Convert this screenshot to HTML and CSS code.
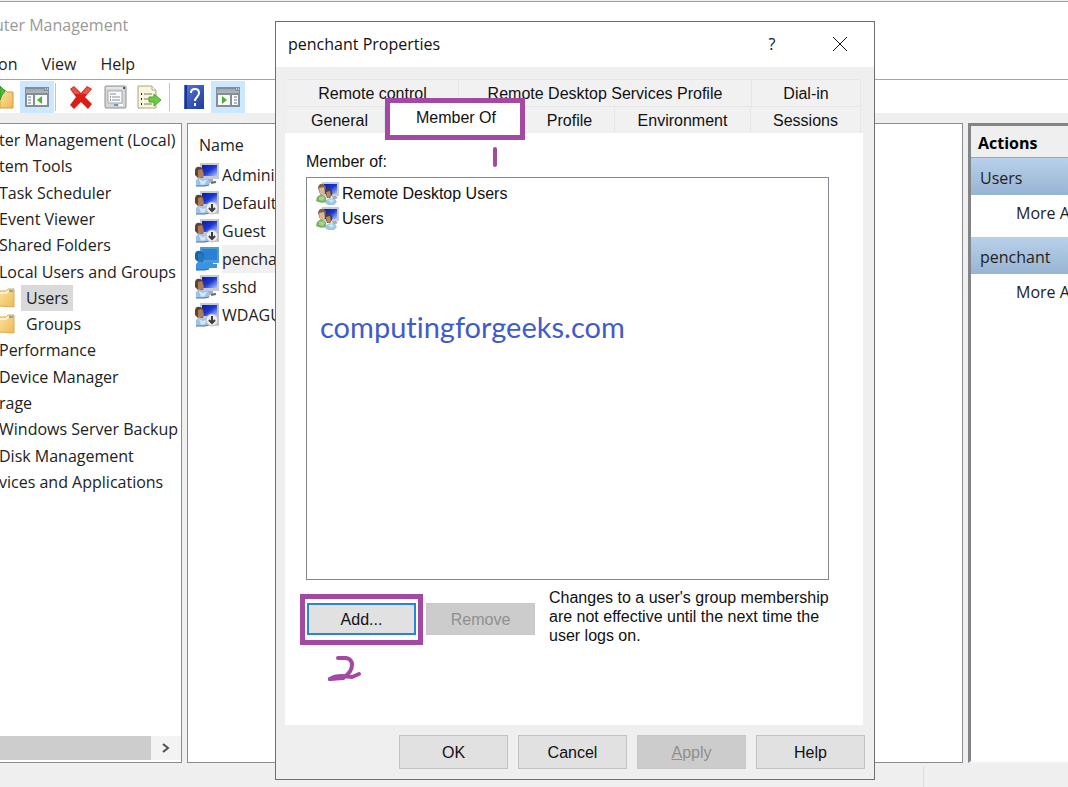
FILE: index.html
```html
<!DOCTYPE html>
<html lang="en">
<head>
  <meta charset="UTF-8">
  <meta name="viewport" content="width=device-width, initial-scale=1.0">
  <title>Computer Management</title>
  <link rel="stylesheet" href="styles.css">
</head>
<body>
  <!-- Shared icons -->
  <svg class="defs" width="0" height="0" aria-hidden="true">
    <defs>
      <linearGradient id="screen" x1="0" y1="0" x2="1" y2="1">
        <stop offset="0" stop-color="#0a1caa"/>
        <stop offset="0.5" stop-color="#1c36d2"/>
        <stop offset="1" stop-color="#b4c8fa"/>
      </linearGradient>
      <linearGradient id="folderFill" x1="0" y1="0" x2="1" y2="1">
        <stop offset="0" stop-color="#fde6a0"/>
        <stop offset="1" stop-color="#edb854"/>
      </linearGradient>
      <linearGradient id="bookFill" x1="0" y1="0" x2="1" y2="1">
        <stop offset="0" stop-color="#5877d8"/>
        <stop offset="1" stop-color="#1f3c9c"/>
      </linearGradient>
      <symbol id="user" viewBox="0 0 24 24">
        <path d="M5 0h19v16H5z" fill="#c6cad2"/>
        <path d="M7 2h15v11H7z" fill="url(#screen)"/>
        <path d="M13 16h5v2h3v2h-8z" fill="#a9adb3"/>
        <path d="M16 20l5-1" stroke="#6d7178" stroke-width="2"/>
        <path d="M0 7q1-4 5-3 4 1 4 5l-1 6H3L0 12z" fill="#5a4436"/>
        <path d="M3 7l4-1 2 6-2 3-4-1z" fill="#b17b55"/>
        <path d="M1 23v-6l3-3 4 2 4-1 3 4-1 3-4 1z" fill="#9cc3ea"/>
        <path d="M4 16l4 2 4-2-2 5-4 1z" fill="#d3e7f9"/>
        <path d="M1 23h9l4-1" fill="none" stroke="#55718f"/>
      </symbol>
      <symbol id="user-disabled" viewBox="0 0 24 24">
        <path d="M22 1h2v22h-8z" fill="#c6cad2"/>
        <use href="#user" width="24" height="24"/>
        <path d="M23 1v21" stroke="#b9bdc5" stroke-width="2"/>
        <circle cx="17" cy="17" r="6" fill="#ececec" stroke="#b9bcc2"/>
        <path d="M17 13v7M14 17l3 3 3-3" fill="none" stroke="#3c3c3c" stroke-width="2"/>
      </symbol>
      <symbol id="user-selected" viewBox="0 0 24 24">
        <path d="M5 0h19v16H5z" fill="#4b9bd8"/>
        <path d="M7 2h15v11H7z" fill="#2a80d2"/>
        <path d="M12 15h6v2h4v4h-8z" fill="#3e92d6"/>
        <path d="M0 7q1-4 5-3 4 1 4 5l-1 6H3L0 12z" fill="#1a64a8"/>
        <path d="M3 7l4-1 2 6-2 3-4-1z" fill="#2876ba"/>
        <path d="M1 23v-6l3-3 4 2 4-1 3 4-1 3-4 1z" fill="#3a94e2"/>
        <path d="M1 23h9l4-1" fill="none" stroke="#1d6db2"/>
      </symbol>
      <symbol id="group" viewBox="0 0 24 24">
        <path d="M7 0h17v14H7z" fill="#c6cad2"/>
        <path d="M9 2h13v10H9z" fill="url(#screen)"/>
        <path d="M17 14h4l2 2-5 2z" fill="#a9adb3"/>
        <path d="M3 6q1-5 5-4 3 1 3 4l-1 6H5z" fill="#7d5f4b"/>
        <path d="M4 6l5-1 1 6-3 3-2-2z" fill="#dbb698"/>
        <path d="M1 19l1-4 4-3 5 3v5q-5 2-10-1z" fill="#76b25f"/>
        <path d="M4 15l4-1 2 2-2 3-4-1z" fill="#a5d38d"/>
        <path d="M10 9q2-4 5-2 3 2 2 6l-2 3h-3z" fill="#4f3c31"/>
        <path d="M11 10l4-1 1 5-2 2-2-1z" fill="#b4876a"/>
        <path d="M10 21l1-3 4-2 5 1 2 3-3 3h-6z" fill="#9dc6e4"/>
        <path d="M13 18l4-1 2 2-3 2z" fill="#cbe3f4"/>
      </symbol>
      <symbol id="folder" viewBox="0 0 16 20">
        <path d="M0 3h7l2-2h6v18l-15-1z" fill="url(#folderFill)" stroke="#d9ac50"/>
        <path d="M0 5h7l2-2h5" fill="none" stroke="#fff3c9" stroke-width="2"/>
        <path d="M10 3h4" stroke="#8fa2b2" stroke-width="2"/>
      </symbol>
    </defs>
  </svg>

  <div class="window">
    <header class="titlebar">uter Management</header>
    <nav class="menubar">
      <button type="button">on</button>
      <button type="button">View</button>
      <button type="button">Help</button>
    </nav>
    <div class="toolbar">
      <button type="button" class="tool tool-cut" aria-label="Up one level">
        <svg width="14" height="24" viewBox="0 0 14 24">
          <path d="M0 5h5l2 2h6v16H0z" fill="url(#folderFill)" stroke="#cf9c3e"/>
          <path d="M0 1l5 5-3 4-2 5z" fill="#4dbb37" stroke="#35962a"/>
        </svg>
      </button>
      <button type="button" class="tool active" aria-label="Show/Hide Console Tree">
        <svg width="24" height="20" viewBox="0 0 24 20">
          <path d="M0 0h24v20H0z" fill="#858d97"/>
          <path d="M1 3h18" stroke="#c2c8cf"/>
          <path d="M20 2h1M22 2h1" stroke="#fff"/>
          <path d="M1 5h22" stroke="#d5dae0"/>
          <path d="M2 8h6v10H2zM10 8h12v10H10z" fill="#fafafa"/>
          <path d="M3 10h3M3 13h3M3 16h3" stroke="#6b7785"/>
          <path d="M17 9v8l-5-4z" fill="#47b52f"/>
        </svg>
      </button>
      <span class="sep"></span>
      <button type="button" class="tool" aria-label="Delete">
        <svg width="24" height="24" viewBox="0 0 24 24">
          <path d="M1 4l4-3 7 7 6-7 5 3-7 8 7 7-4 5-7-7-7 7-4-4 6-8z" fill="#d91e18"/>
          <path d="M2 4l3-2 7 8 6-8 4 2-4 5H6z" fill="#e9544c"/>
        </svg>
      </button>
      <button type="button" class="tool" aria-label="Properties">
        <svg width="23" height="24" viewBox="0 0 23 24">
          <rect x="1" y="1" width="21" height="22" rx="1" fill="#d4d6d8" stroke="#8d9297"/>
          <path d="M2 3h17" stroke="#f4f4f4"/>
          <path d="M19 2l2 2M21 2l-2 2" stroke="#555"/>
          <path d="M4 6h14v12H4z" fill="#fafafa" stroke="#a5a9ad"/>
          <path d="M6 9h6M8 12h8M8 15h8" stroke="#8b8f94"/>
          <path d="M6 12h1M6 15h1" stroke="#333"/>
          <path d="M10 20h4" stroke="#4b9fe0" stroke-width="2"/>
          <path d="M15 20h4" stroke="#fff" stroke-width="2"/>
        </svg>
      </button>
      <button type="button" class="tool" aria-label="Export List">
        <svg width="24" height="24" viewBox="0 0 24 24">
          <path d="M1 1h14l4 4v18H1z" fill="#fbf5dc" stroke="#a9a48c"/>
          <path d="M15 1v4h4" fill="#fff" stroke="#a9a48c"/>
          <path d="M7 9h8M7 14h6M7 19h8" stroke="#7d7b70"/>
          <path d="M4 9h1M4 14h1M4 19h1" stroke="#222" stroke-width="2"/>
          <path d="M12 12h5V9l7 6-7 6v-4h-5z" fill="#6bcb45" stroke="#48a92f"/>
        </svg>
      </button>
      <span class="sep"></span>
      <button type="button" class="tool" aria-label="Help">
        <svg width="20" height="24" viewBox="0 0 20 24">
          <path d="M0 0h20v24H0z" fill="url(#bookFill)"/>
          <path d="M2 0v24" stroke="#1b348c" stroke-width="2"/>
          <path d="M7 8q0-4 4-4t4 4q0 2-2 4t-2 4" fill="none" stroke="#fff" stroke-width="2"/>
          <path d="M11 18v3" stroke="#fff" stroke-width="2"/>
        </svg>
      </button>
      <button type="button" class="tool active" aria-label="Show/Hide Action Pane">
        <svg width="24" height="20" viewBox="0 0 24 20">
          <path d="M0 0h24v20H0z" fill="#858d97"/>
          <path d="M1 3h18" stroke="#c2c8cf"/>
          <path d="M20 2h1M22 2h1" stroke="#fff"/>
          <path d="M1 5h22" stroke="#d5dae0"/>
          <path d="M2 8h12v10H2zM16 8h6v10h-6z" fill="#fafafa"/>
          <path d="M18 10h3M18 13h3M18 16h3" stroke="#6b7785"/>
          <path d="M6 9v8l5-4z" fill="#47b52f"/>
        </svg>
      </button>
    </div>

    <main class="panes">
      <section class="pane tree-pane">
        <ul class="tree">
          <li>ter Management (Local)</li>
          <li>tem Tools</li>
          <li>Task Scheduler</li>
          <li>Event Viewer</li>
          <li>Shared Folders</li>
          <li>Local Users and Groups</li>
          <li class="leaf"><svg width="16" height="20"><use href="#folder"/></svg><span class="selected">Users</span></li>
          <li class="leaf"><svg width="16" height="20"><use href="#folder"/></svg><span>Groups</span></li>
          <li>Performance</li>
          <li>Device Manager</li>
          <li>rage</li>
          <li>Windows Server Backup</li>
          <li>Disk Management</li>
          <li>vices and Applications</li>
        </ul>
        <div class="scrollbar">
          <span class="thumb"></span>
          <button type="button" aria-label="Scroll right">
            <svg width="8" height="10" viewBox="0 0 8 10"><path d="M1 1l5 4-5 4" fill="none" stroke="#505050" stroke-width="2"/></svg>
          </button>
        </div>
      </section>

      <section class="pane">
        <table class="users">
          <colgroup>
            <col class="col-pic">
            <col>
          </colgroup>
          <thead>
            <tr><th colspan="2">Name</th></tr>
          </thead>
          <tbody>
            <tr><td class="pic"><svg width="24" height="24"><use href="#user"/></svg></td><td>Administrator</td></tr>
            <tr><td class="pic"><svg width="24" height="24"><use href="#user-disabled"/></svg></td><td>DefaultAccount</td></tr>
            <tr><td class="pic"><svg width="24" height="24"><use href="#user-disabled"/></svg></td><td>Guest</td></tr>
            <tr><td class="pic"><svg width="24" height="24"><use href="#user-selected"/></svg></td><td class="current">penchant</td></tr>
            <tr><td class="pic"><svg width="24" height="24"><use href="#user"/></svg></td><td>sshd</td></tr>
            <tr><td class="pic"><svg width="24" height="24"><use href="#user-disabled"/></svg></td><td>WDAGUtilityAccount</td></tr>
          </tbody>
        </table>
      </section>

      <aside class="actions">
        <h2>Actions</h2>
        <h3>Users</h3>
        <a href="#">More Actions</a>
        <h3>penchant</h3>
        <a href="#">More Actions</a>
      </aside>
    </main>
    <footer class="statusbar"><span></span></footer>
  </div>

  <div class="dialog" role="dialog" aria-labelledby="dialogTitle">
    <div class="dialog-title">
      <h1 id="dialogTitle">penchant Properties</h1>
      <button type="button" class="help">?</button>
      <button type="button" class="close" aria-label="Close">
        <svg width="16" height="16" viewBox="0 0 16 16"><path d="M1 1l14 14M15 1L1 15" stroke="#111" fill="none"/></svg>
      </button>
    </div>

    <div class="tabs" role="tablist">
      <div class="tab-row row-back">
        <button type="button" role="tab">Remote control</button>
        <button type="button" role="tab">Remote Desktop Services Profile</button>
        <button type="button" role="tab">Dial-in</button>
      </div>
      <div class="tab-row row-front">
        <button type="button" role="tab">General</button>
        <button type="button" role="tab" class="open" aria-selected="true">Member Of
          <svg class="mark-one" width="6" height="22" viewBox="0 0 6 22"><path d="M3 3v16" stroke="#a349a4" stroke-width="4" stroke-linecap="round"/></svg>
        </button>
        <button type="button" role="tab">Profile</button>
        <button type="button" role="tab">Environment</button>
        <button type="button" role="tab">Sessions</button>
      </div>
    </div>

    <div class="panel" role="tabpanel">
      <p class="list-label" id="memberLabel">Member of:</p>
      <ul class="members" aria-labelledby="memberLabel">
        <li><svg width="24" height="24"><use href="#group"/></svg>Remote Desktop Users</li>
        <li><svg width="24" height="24"><use href="#group"/></svg>Users</li>
        <li class="watermark">computingforgeeks.com</li>
      </ul>
      <div class="panel-actions">
        <div class="highlight">
          <button type="button" class="btn primary">Add...</button>
          <svg class="mark-two" width="36" height="28" viewBox="0 0 36 28">
            <path d="M11 3l8 0q6 1 6 7 0 7-9 13" fill="none" stroke="#a349a4" stroke-width="4" stroke-linecap="round"/>
            <path d="M3 24q4-3 12-3l10 1 7-3" fill="none" stroke="#a349a4" stroke-width="4" stroke-linecap="round"/>
            <path d="M3 24l13-1" stroke="#a349a4" stroke-width="4" stroke-linecap="round"/>
          </svg>
        </div>
        <button type="button" class="btn" disabled>Remove</button>
        <p class="hint">Changes to a user's group membership<br>are not effective until the next time the<br>user logs on.</p>
      </div>
    </div>

    <div class="dialog-buttons">
      <button type="button" class="btn">OK</button>
      <button type="button" class="btn">Cancel</button>
      <button type="button" class="btn" disabled><u>A</u>pply</button>
      <button type="button" class="btn">Help</button>
    </div>
  </div>
</body>
</html>
```

FILE: styles.css
```css
* {
  margin: 0;
  padding: 0;
  box-sizing: border-box;
}

body {
  height: 100vh;
  overflow: hidden;
  position: relative;
  background: #efefef;
  color: #222;
  font-family: "Open Sans", "Noto Sans", sans-serif;
  font-size: 16px;
  line-height: 24px;
}

button {
  border: none;
  background: none;
  color: inherit;
  font: inherit;
}

ul {
  list-style: none;
}

svg {
  display: block;
  flex-shrink: 0;
}

.defs {
  position: absolute;
}

/* Console window */
.window {
  height: 100vh;
  display: flex;
  flex-direction: column;
  padding-top: 1px;
}

.titlebar {
  height: 48px;
  padding-top: 11px;
  border-top: 1px solid #a0a0a0;
  background: #fff;
  color: #999;
  text-indent: -6px;
}

.menubar {
  display: flex;
  gap: 24px;
  height: 31px;
  background: #fff;
  border-bottom: 1px solid #a5a5a5;
}

.menubar button:first-child {
  margin-left: -2px;
}

.toolbar {
  display: flex;
  align-items: center;
  height: 33px;
  background: #fff;
}

.tool {
  display: flex;
  align-items: center;
  justify-content: center;
  width: 34px;
  height: 32px;
}

.tool-cut {
  justify-content: flex-start;
  width: 20px;
}

.tool.active {
  background: #cce8ff;
}

.sep {
  width: 1px;
  height: 28px;
  margin: 0 8px 0 1px;
  background: #c4c4c4;
}

.tool + .sep ~ .sep {
  margin: 0 7px 0 3px;
}

.panes {
  flex: 1;
  min-height: 0;
  display: grid;
  grid-template-columns: 182px minmax(0, 1fr) 100px;
  gap: 5px;
  padding-top: 10px;
}

.pane {
  background: #fff;
  border: 1px solid #8a8c90;
  overflow: hidden;
}

.tree-pane {
  display: flex;
  flex-direction: column;
  justify-content: space-between;
  border-left: none;
}

.tree {
  display: grid;
  grid-auto-rows: 1fr;
  height: 368px;
  margin-top: 3px;
  white-space: nowrap;
}

.tree li {
  display: flex;
  align-items: center;
  margin-left: -1px;
}

.leaf span {
  margin-left: 6px;
  padding: 1px 5px;
}

.leaf .selected {
  background: #d9d9d9;
}

.scrollbar {
  display: flex;
  height: 26px;
  background: #f3f3f3;
  border-bottom: 2px solid #fff;
}

.thumb {
  flex: 1;
  background: #cdcdcd;
}

.scrollbar button {
  display: flex;
  align-items: center;
  justify-content: center;
  width: 30px;
}

.users {
  table-layout: fixed;
  width: 100px;
  border-collapse: collapse;
  white-space: nowrap;
}

.users .col-pic {
  width: 34px;
}

.users th {
  height: 37px;
  padding: 4px 0 0 11px;
  font-weight: 400;
  text-align: left;
}

.users td {
  height: 28px;
  overflow: hidden;
}

.users .pic {
  padding-left: 7px;
}

.users .current {
  background: #f0f0f0;
}

.actions {
  overflow: hidden;
  background: #fff;
  border-top: 3px solid #828488;
  border-left: 3px solid #828488;
  border-bottom: 2px solid #f6f6f6;
  white-space: nowrap;
}

.actions h2 {
  height: 32px;
  padding: 5px 7px;
  background: #efefef;
  border-bottom: 1px solid #a5a5a5;
  color: #000;
  font-size: 16px;
  font-weight: 700;
}

.actions h3 {
  height: 37px;
  padding: 8px 9px;
  background: linear-gradient(#b9d0e9, #98b4d3);
  font-size: 16px;
  font-weight: 400;
}

.actions a {
  display: block;
  height: 42px;
  padding: 6px 0 0 45px;
  color: inherit;
  text-decoration: none;
}

.statusbar {
  display: flex;
  justify-content: flex-end;
  height: 24px;
  padding-top: 4px;
}

.statusbar span {
  width: 145px;
  border-left: 1px solid #dcdcdc;
}

/* Properties dialog */
.dialog {
  position: absolute;
  top: 21px;
  right: 193px;
  bottom: 7px;
  left: 275px;
  display: flex;
  flex-direction: column;
  background: #efefef;
  border: 1px solid #6e6e6e;
  color: #111;
  font-family: "Liberation Sans", Arial, sans-serif;
}

.dialog-title {
  display: flex;
  align-items: center;
  height: 45px;
  padding: 0 25px 2px 12px;
  background: #fff;
  font-family: "Open Sans", "Noto Sans", sans-serif;
}

.dialog-title h1 {
  flex: 1;
  font-size: 16px;
  font-weight: 400;
}

.dialog-title button {
  width: 18px;
  display: flex;
  justify-content: center;
}

.dialog-title .help {
  margin-right: 50px;
}

.tabs {
  padding: 12px 13px 0 11px;
}

.tab-row {
  display: grid;
}

.row-back {
  grid-template-columns: 172fr 293fr 109fr;
}

.row-front {
  grid-template-columns: 98fr 140fr 90fr 136fr 110fr;
}

.tab-row button {
  height: 27px;
  padding-top: 2px;
  background: #f1f1f1;
  border: 1px solid #e6e6e6;
  border-left: none;
  border-bottom: none;
}

.row-front button:first-child {
  padding-left: 8px;
}

.tab-row .open {
  position: relative;
  height: 42px;
  margin: -8px 0 -7px;
  padding: 0 0 2px 2px;
  border: 5px solid #a349a4;
  background: #fff;
}

.mark-one {
  position: absolute;
  right: 22px;
  top: 43px;
}

.panel {
  flex: 1;
  min-height: 0;
  display: flex;
  flex-direction: column;
  margin: 0 11px 0 9px;
  padding: 17px 34px 80px 21px;
  background: #fff;
}

.list-label {
  margin-bottom: 3px;
}

.members {
  flex: 1;
  border: 1px solid #828790;
  padding: 3px 8px;
}

.members li {
  display: flex;
  align-items: center;
  gap: 3px;
  height: 25px;
}

.members .watermark {
  height: 44px;
  margin-top: 74px;
  padding-left: 5px;
  color: #3f5bcb;
  font-family: Lato, sans-serif;
  font-size: 29px;
  font-variant-ligatures: none;
}

.panel-actions {
  display: flex;
  align-items: flex-end;
  margin-top: 8px;
}

.highlight {
  position: relative;
  margin-left: -6px;
  padding: 4px 2px 5px;
  border: 5px solid #a349a4;
}

.mark-two {
  position: absolute;
  left: 22px;
  top: 56px;
}

.btn {
  width: 109px;
  height: 34px;
  padding-top: 1px;
  background: #e1e1e1;
  border: 1px solid #c2c2c2;
}

.btn:disabled {
  background: #cccccc;
  border-color: #c8c8c8;
  color: #8f8f8f;
}

.panel-actions .btn {
  display: block;
  height: 32px;
}

.panel-actions .primary {
  border: 2px solid #2a86d4;
}

.panel-actions .btn:disabled {
  margin: 0 14px 10px 3px;
}

.hint {
  flex: 1;
  line-height: 19px;
  white-space: nowrap;
}

.dialog-buttons {
  display: flex;
  justify-content: flex-end;
  gap: 10px;
  padding: 10px 9px;
}
```
